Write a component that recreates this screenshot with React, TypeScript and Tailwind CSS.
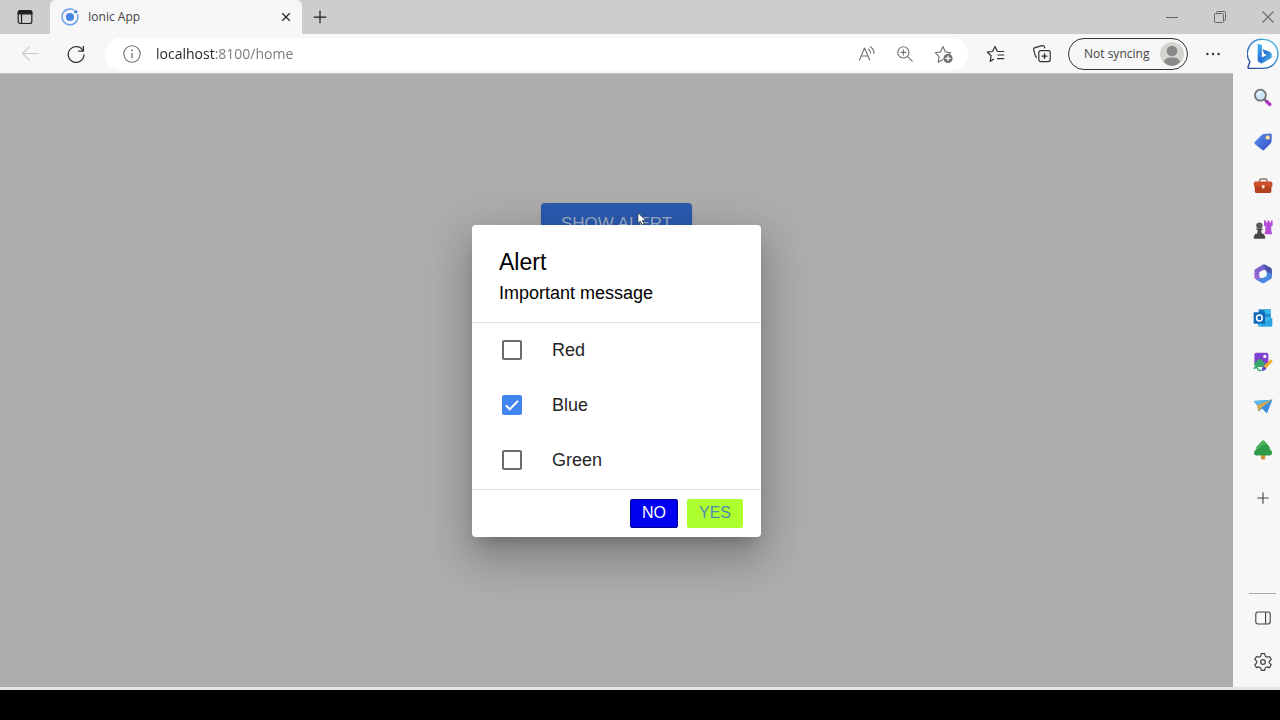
import React, { useState } from 'react';
import { Plus, X } from 'lucide-react';

interface IconProps {
  className?: string;
}

const TabActionsIcon: React.FC<IconProps> = ({ className }) => (
  <svg viewBox="0 0 16 16" className={className} fill="none" stroke="currentColor" strokeWidth="1.2">
    <rect x="1.2" y="1.5" width="13.6" height="13" rx="2" />
    <path d="M1.2 3.5a2 2 0 0 1 2-2h9.6a2 2 0 0 1 2 2V5H1.2z" fill="currentColor" />
    <path d="M4.5 5v9.5" />
  </svg>
);

const IonicIcon: React.FC<IconProps> = ({ className }) => (
  <svg viewBox="0 0 18 18" className={className} fill="none">
    <path d="M12.6 1.9A7.9 7.9 0 1 0 16.3 6" stroke="#6b9eec" strokeWidth="1.5" />
    <circle cx="9" cy="9" r="4.1" fill="#4a86e8" />
    <circle cx="14.7" cy="3.7" r="1.8" fill="#4a86e8" />
  </svg>
);

const BackIcon: React.FC<IconProps> = ({ className }) => (
  <svg viewBox="0 0 18 18" className={className} fill="none" stroke="currentColor" strokeWidth="1.2">
    <path d="M17.5 8.5H1.5M8.5 1.5 1.5 8.5l7 7" />
  </svg>
);

const RefreshIcon: React.FC<IconProps> = ({ className }) => (
  <svg viewBox="0 0 18 18" className={className} fill="none" stroke="currentColor" strokeWidth="1.3">
    <path d="M16.2 6A7.9 7.9 0 1 0 17 9.6" />
    <path d="M16.4 1v5.2h-5.2" />
  </svg>
);

const InfoIcon: React.FC<IconProps> = ({ className }) => (
  <svg viewBox="0 0 18 18" className={className} fill="none" stroke="currentColor" strokeWidth="1.1">
    <circle cx="9" cy="9" r="8.2" />
    <path d="M9 8v5.2" strokeWidth="1.3" />
    <circle cx="9" cy="5.4" r=".9" fill="currentColor" stroke="none" />
  </svg>
);

const ReadAloudIcon: React.FC<IconProps> = ({ className }) => (
  <svg viewBox="0 0 18 18" className={className} fill="none" stroke="currentColor" strokeWidth="1.1" strokeLinecap="round">
    <path d="M1.5 15 6.4 3.2h.3L11.7 15M3.2 11h6.8" />
    <path d="M10.6 4.2a5 5 0 0 1 2 3.9M12.4 1.8a8 8 0 0 1 3.6 6.8" />
  </svg>
);

const ZoomIcon: React.FC<IconProps> = ({ className }) => (
  <svg viewBox="0 0 18 18" className={className} fill="none" stroke="currentColor" strokeWidth="1.1" strokeLinecap="round">
    <circle cx="7.4" cy="7.4" r="5.6" />
    <path d="m11.6 11.6 4.6 4.6M7.4 4.9v5M4.9 7.4h5" />
  </svg>
);

const AddFavoriteIcon: React.FC<IconProps> = ({ className }) => (
  <svg viewBox="0 0 20 20" className={className} fill="none">
    <path
      d="m9 15.4-4.8 2.8.9-5.6L1.2 8.7l5.4-.8L9 2.6l2.4 5.3 5.4.8-2.2 2"
      stroke="currentColor"
      strokeWidth="1.1"
      strokeLinejoin="round"
    />
    <circle cx="14" cy="14.4" r="4.6" fill="currentColor" />
    <path d="M14 11.8V17M11.400 14.4h5.2" stroke="#fff" strokeWidth="1.3" />
  </svg>
);

const FavoritesIcon: React.FC<IconProps> = ({ className }) => (
  <svg viewBox="0 0 20 20" className={className} fill="none" stroke="currentColor" strokeWidth="1.2" strokeLinejoin="round">
    <path d="m7.8 15-3.6 2.4.9-5.6L1.400 8.200l5.200-.7L9 2.500l2.300 5h6.900" />
    <path d="M11.500 11h6.700M11 14.600h7.200" />
  </svg>
);

const CollectionsIcon: React.FC<IconProps> = ({ className }) => (
  <svg viewBox="0 0 20 20" className={className} fill="none" stroke="currentColor" strokeWidth="1.2" strokeLinejoin="round">
    <rect x="6.8" y="6.6" width="11.4" height="11" rx="2" />
    <path d="M12.5 9.2V15M9.6 12.1h5.8" strokeWidth="1.4" />
    <path d="M4.9 13.8 3.6 12.6 1.7 6a2 2 0 0 1 1.4-2.4l7-1.9a2 2 0 0 1 2.4 1.4l.4 1.3" />
  </svg>
);

const AvatarIcon: React.FC<IconProps> = ({ className }) => (
  <svg viewBox="0 0 24 24" className={className}>
    <circle cx="12" cy="12" r="12" fill="#d6d4d1" />
    <circle cx="12" cy="9" r="5.3" fill="#8a8886" />
    <path d="M4.2 20.6c0-3.3 2.6-5 7.8-5s7.8 1.7 7.8 5A12 12 0 0 1 12 24a12 12 0 0 1-7.8-3.4z" fill="#8a8886" />
  </svg>
);

const MoreIcon: React.FC<IconProps> = ({ className }) => (
  <svg viewBox="0 0 16 16" className={className} fill="currentColor">
    <circle cx="2.4" cy="8" r="1.2" />
    <circle cx="8" cy="8" r="1.2" />
    <circle cx="13.6" cy="8" r="1.2" />
  </svg>
);

const BingIcon: React.FC<IconProps> = ({ className }) => (
  <svg viewBox="0 0 32 32" className={className}>
    <defs>
      <linearGradient id="bing-ring" x1="0" y1="1" x2="1" y2="0">
        <stop offset="0" stopColor="#2b3f9c" />
        <stop offset=".5" stopColor="#3a86cc" />
        <stop offset="1" stopColor="#4cc4e2" />
      </linearGradient>
      <linearGradient id="bing-mark" x1="0" y1="0" x2="1" y2="1">
        <stop offset="0" stopColor="#3fc0f0" />
        <stop offset=".5" stopColor="#2a6fd6" />
        <stop offset="1" stopColor="#45c9d8" />
      </linearGradient>
    </defs>
    <path
      d="M16.4 1.4a14.4 14.4 0 1 1 0 29H2c-.9 0-1.2-.8-.9-1.600l1.800-5A14.400 14.400 0 0 1 16.400 1.400z"
      fill="#fff"
      stroke="url(#bing-ring)"
      strokeWidth="1.4"
    />
    <path
      d="m10.600 5.400 4.200 1.600v12.600l5-2.700-2.800-1.300-1.700-4.500 7.800 3c1.100.5 1.600 1.300 1.600 2.400v2.200c0 .8-.3 1.300-1.100 1.700l-8.300 4.800c-.8.4-1.500.3-2.200-.1l-1.500-1c-.7-.5-1-1-1-1.800z"
      fill="url(#bing-mark)"
    />
  </svg>
);

const SearchIcon: React.FC<IconProps> = ({ className }) => (
  <svg viewBox="0 0 20 20" className={className}>
    <path d="m13.400 13.200 3.400 3.200" stroke="#b03bc9" strokeWidth="3.400" strokeLinecap="round" />
    <path d="m11 10.800 2.200 2.200" stroke="#666" strokeWidth="1.800" />
    <circle cx="7.400" cy="7.200" r="5.500" fill="#cbe6f8" stroke="#717171" strokeWidth="1.700" />
    <path d="M4.600 7a3.300 3.300 0 0 1 3-2.600" stroke="#fff" strokeWidth="1.200" fill="none" />
  </svg>
);

const ShoppingIcon: React.FC<IconProps> = ({ className }) => (
  <svg viewBox="0 0 20 20" className={className}>
    <defs>
      <linearGradient id="tag" x1="0" y1="0" x2="1" y2="1">
        <stop offset="0" stopColor="#5b8df0" />
        <stop offset="1" stopColor="#3450c4" />
      </linearGradient>
    </defs>
    <path
      d="m10.600 2 6.600-.5c1 0 1.600.6 1.600 1.500l-.3 6.800c0 .6-.3 1-.7 1.400l-6.400 6.500c-.7.7-1.700.7-2.400 0l-6.900-5.500c-.8-.7-.8-1.700-.1-2.400l7.200-7.200c.4-.4.9-.6 1.400-.6z"
      fill="url(#tag)"
    />
    <rect x="12.600" y="3.400" width="4.200" height="4.200" rx="1.400" fill="#f4d071" />
    <circle cx="14.700" cy="5.500" r=".9" fill="#fff" />
  </svg>
);

const ToolsIcon: React.FC<IconProps> = ({ className }) => (
  <svg viewBox="0 0 20 20" className={className}>
    <path d="M6.600 6V4.400c0-1 .6-1.500 1.500-1.500h4.400c.9 0 1.500.6 1.500 1.500V6" fill="none" stroke="#8a7a62" strokeWidth="1.500" />
    <rect x=".8" y="5.600" width="18.600" height="5.400" rx="1.600" fill="#cf4f2c" />
    <path d="M1.800 10.600h16.600v4.900c0 .8-.6 1.400-1.400 1.400H3.200c-.8 0-1.400-.6-1.400-1.400z" fill="#b34020" />
    <rect x="8.800" y="9" width="2.800" height="3.600" rx="1" fill="#f0dcc4" />
  </svg>
);

const GamesIcon: React.FC<IconProps> = ({ className }) => (
  <svg viewBox="0 0 20 20" className={className}>
    <path d="M11 .6h2v1.800h1.500V.6h2v1.800H18V.6h1.600v5l-1.500 1.200.4 5.200 1 2.200h-8.200l1-2.600.2-4.800L11 5.600z" fill="#b44ad8" />
    <circle cx="6.400" cy="5.600" r="3.200" fill="#5a5a5a" />
    <path d="M3.400 8.400h6V10H8.200l.6 4.200H4.100l.6-4.200H3.400z" fill="#4a4a4a" />
    <path d="M2.400 13.800h8.200l1.500 2.600v2.400H.8v-2.400z" fill="#474747" />
  </svg>
);

const OfficeIcon: React.FC<IconProps> = ({ className }) => (
  <svg viewBox="0 0 20 20" className={className}>
    <defs>
      <linearGradient id="office-a" x1="0" y1="1" x2="1" y2="0">
        <stop offset="0" stopColor="#b06ad8" />
        <stop offset="1" stopColor="#5c62c4" />
      </linearGradient>
    </defs>
    <path d="M10.200.6c.6-.3 1.200-.3 1.800 0l6 3.500c.6.4.9.9.9 1.600v6.500L13.600 9V7L9.400 4.400z" fill="#4650a8" />
    <path d="M10.200.6 2.400 5c-.7.400-1 1-1 1.700v6.600c0 .8.300 1.300 1 1.700l4.300 2.300 2.200-2.200-2.400-1.800V8.400l5.900-3.600V2.200z" fill="url(#office-a)" />
    <path d="M18.900 10.200v3.100c0 .8-.3 1.300-1 1.700l-6.700 4c-.7.400-1.400.400-2.100 0l-6.400-3.600 4.500-.6 6.400-3.600V7.400z" fill="#4b86e0" />
    <path d="m10 6.200 3.500 2v3.900L10 14.100l-3.500-2V8.200z" fill="#f5f9fc" />
  </svg>
);

const OutlookIcon: React.FC<IconProps> = ({ className }) => (
  <svg viewBox="0 0 20 20" className={className}>
    <path d="M5.600 1.400h12v9.200h-12z" fill="#1679c2" />
    <path d="M11.500 1.400h6.100v4.900h-6.100z" fill="#38b8ea" />
    <path d="M11.500 6.300h6.100v5h-6.100z" fill="#2a8fd5" />
    <path d="m4.800 9 14.400.2v8.300c0 .6-.4 1-1 1H5.800c-.6 0-1-.4-1-1z" fill="#40bfec" />
    <path d="M19.200 9.400 6.200 18.500h12c.6 0 1-.4 1-1z" fill="#2aa4df" />
    <rect x=".6" y="4.200" width="11.600" height="11.600" rx="1" fill="#1269b4" />
    <ellipse cx="6.400" cy="10" rx="2.800" ry="3" fill="none" stroke="#fff" strokeWidth="1.600" />
  </svg>
);

const DesignerIcon: React.FC<IconProps> = ({ className }) => (
  <svg viewBox="0 0 20 20" className={className}>
    <rect x="1.400" y=".8" width="14" height="13" rx="1.800" fill="#8142d0" />
    <circle cx="11.800" cy="4.400" r="1.600" fill="#fff" />
    <path d="m1.400 11.200 4-3.600c.9-.8 1.900-.8 2.800 0l4.400 4.200-3 3.200H3.200c-1 0-1.800-.8-1.800-1.800z" fill="#39a56a" />
    <path d="m17.800 7.200 2 1.900-7.400 8.200-2.700-2.100z" fill="#f5ac2e" />
    <path d="m10.400 14 2.800 2.300c-.8 2.200-2.800 2.700-5 2.500 1-1.100.8-3.300 2.200-4.800z" fill="#5a48c8" />
    <path d="M.6 16.600c2-1.400 4.200-1.400 4.200.2 0 1.400 1.600 2 3.600 1.600" fill="none" stroke="#2fa56c" strokeWidth="1.400" />
  </svg>
);

const DropIcon: React.FC<IconProps> = ({ className }) => (
  <svg viewBox="0 0 20 20" className={className}>
    <path d="M.6 5 19.400 3.600l-5.500 13.600-4.700-4.800-3.800 3-1.300-6.200z" fill="#3c94dc" />
    <path d="M.6 5l18.800-1.400L4.100 9.200z" fill="#5fb4ea" />
    <path d="m4.100 9.200 15.300-5.600-10.600 7.600-3.400 4.200z" fill="#d9a946" />
    <path d="M19.400 3.600 9.200 12.400l4.700 4.800z" fill="#3f8ee0" />
  </svg>
);

const TreeIcon: React.FC<IconProps> = ({ className }) => (
  <svg viewBox="0 0 20 20" className={className}>
    <path d="M8 14h4.200v4.600c0 .5-.3.800-.8.800H8.800c-.5 0-.8-.3-.8-.8z" fill="#d09038" />
    <path
      d="M8.800 1.200c.8-.9 2-.9 2.800 0L16.200 6.600c.6.7.7 1.300.3 1.900l2 2.600c1.400 2 .4 4.300-1.800 4.300H3.500c-2.200 0-3.200-2.300-1.800-4.300l2-2.600c-.4-.6-.3-1.200.3-1.900z"
      fill="#2f9a48"
    />
    <path d="M8.800 1.200c.8-.9 2-.9 2.800 0l2 2.400c-3.600 2.400-7.300 4.600-11.400 7.100l1.500-2.200c-.4-.6-.3-1.200.3-1.900z" fill="#48b05a" />
  </svg>
);

const PanelIcon: React.FC<IconProps> = ({ className }) => (
  <svg viewBox="0 0 16 16" className={className} fill="none" stroke="currentColor" strokeWidth="1.1">
    <rect x=".8" y="2" width="14.4" height="12" rx="2.2" />
    <path d="M10.600 2v12" />
  </svg>
);

const SettingsIcon: React.FC<IconProps> = ({ className }) => (
  <svg viewBox="0 0 20 20" className={className} fill="none" stroke="currentColor" strokeWidth="1.2" strokeLinejoin="round">
    <path d="M8.300 1.700h3.400l.6 2.500 1.700 1 2.500-.7 1.700 2.900-1.900 1.800v1.700l1.900 1.800-1.700 2.900-2.500-.7-1.700 1-.6 2.500H8.300l-.6-2.500-1.700-1-2.500.7-1.700-2.900 1.900-1.800V9.200L1.800 7.400l1.700-2.900 2.500.7 1.700-1z" />
    <circle cx="10" cy="10" r="2.300" />
  </svg>
);

const CursorIcon: React.FC<IconProps> = ({ className }) => (
  <svg viewBox="0 0 10 14" className={className}>
    <path d="M1 .8v10.400l2.400-2.100 1.700 3.700 1.900-.8-1.700-3.600h3.400z" fill="#fff" stroke="#333" strokeWidth=".7" />
  </svg>
);

const sidebarItems = [
  { label: 'Search', Icon: SearchIcon },
  { label: 'Shopping', Icon: ShoppingIcon },
  { label: 'Tools', Icon: ToolsIcon },
  { label: 'Games', Icon: GamesIcon },
  { label: 'Microsoft 365', Icon: OfficeIcon },
  { label: 'Outlook', Icon: OutlookIcon },
  { label: 'Image Creator', Icon: DesignerIcon },
  { label: 'Drop', Icon: DropIcon },
  { label: 'Tree', Icon: TreeIcon },
];

const TitleBar: React.FC = () => (
  <header className="flex h-[34px] items-stretch bg-[#cdcdcd] text-[#222]">
    <button aria-label="Tab actions" className="flex w-[50px] items-center justify-center">
      <TabActionsIcon className="h-4 w-4" />
    </button>
    <div className="flex w-[252px] items-center rounded-t-md bg-[#f7f7f7] pr-2 pl-[11px]">
      <IonicIcon className="h-[18px] w-[18px]" />
      <span className="ml-[9px] flex-1 text-[12px] text-[#444]">Ionic App</span>
      <button aria-label="Close tab" className="flex h-4 w-4 items-center justify-center">
        <X className="h-[14px] w-[14px]" strokeWidth={2} />
      </button>
    </div>
    <button aria-label="New tab" className="flex w-9 items-center justify-center">
      <Plus className="h-5 w-5" strokeWidth={1.5} />
    </button>
    <div className="ml-auto flex text-[#666]">
      <button aria-label="Minimize" className="flex w-12 items-center justify-center">
        <svg viewBox="0 0 12 12" className="h-3 w-3" stroke="currentColor">
          <path d="M0 6.5h12" />
        </svg>
      </button>
      <button aria-label="Restore" className="flex w-12 items-center justify-center">
        <svg viewBox="0 0 12 12" className="h-3 w-3" fill="none" stroke="currentColor">
          <rect x=".5" y="2.5" width="9" height="9" rx="1" />
          <path d="M2.5 2.5v-1a1 1 0 0 1 1-1h7a1 1 0 0 1 1 1v7a1 1 0 0 1-1 1h-1" />
        </svg>
      </button>
      <button aria-label="Close" className="flex w-9 items-center justify-end pr-[6px]">
        <svg viewBox="0 0 12 12" className="h-3 w-3" stroke="currentColor" strokeWidth="1.1">
          <path d="m.5.5 11 11m0-11-11 11" />
        </svg>
      </button>
    </div>
  </header>
);

const Toolbar: React.FC = () => {
  const [url, setUrl] = useState('localhost:8100/home');

  return (
    <div className="flex h-[39px] items-center bg-[#f7f7f7] pl-[10px] text-[#333]">
      <button aria-label="Back" disabled className="flex w-10 justify-center text-[#ccc]">
        <BackIcon className="h-[18px] w-[18px]" />
      </button>
      <button aria-label="Refresh" className="ml-[6px] flex w-10 justify-center">
        <RefreshIcon className="h-[18px] w-[18px]" />
      </button>
      <div className="ml-[9px] flex h-8 flex-1 items-center rounded-full bg-white pr-[14px] pl-[18px] text-[#707070]">
        <InfoIcon className="h-[18px] w-[18px]" />
        <input
          type="text"
          aria-label="Address"
          value={url}
          onChange={(e) => setUrl(e.target.value)}
          className="ml-[15px] min-w-0 flex-1 bg-linear-to-r from-[#222] from-[59px] to-[#777] to-[59px] bg-clip-text text-[14px] text-transparent outline-none"
        />
        <div className="flex items-center gap-5">
          <button aria-label="Read aloud">
            <ReadAloudIcon className="h-[18px] w-[18px]" />
          </button>
          <button aria-label="Zoom">
            <ZoomIcon className="h-[18px] w-[18px]" />
          </button>
          <button aria-label="Add to favorites">
            <AddFavoriteIcon className="h-5 w-5" />
          </button>
        </div>
      </div>
      <button aria-label="Favorites" className="ml-[10px] flex w-9 justify-center">
        <FavoritesIcon className="h-5 w-5" />
      </button>
      <button aria-label="Collections" className="ml-[10px] flex w-9 justify-center">
        <CollectionsIcon className="h-5 w-5" />
      </button>
      <button className="ml-2 flex h-8 w-[120px] items-center justify-between rounded-full border border-[#333] pr-[3px] pl-[15px] text-[12px] whitespace-nowrap text-[#444]">
        Not syncing
        <AvatarIcon className="h-6 w-6" />
      </button>
      <button aria-label="Settings and more" className="ml-[7px] flex w-9 justify-center">
        <MoreIcon className="h-4 w-4" />
      </button>
      <button aria-label="Discover" className="ml-[15px] flex w-[34px] justify-center">
        <BingIcon className="h-8 w-8" />
      </button>
    </div>
  );
};

const Sidebar: React.FC = () => (
  <aside className="flex w-[47px] flex-col items-stretch bg-[#f7f7f7] pt-[3px] pl-3 text-[#444]">
    {sidebarItems.map(({ label, Icon }) => (
      <button key={label} aria-label={label} className="flex h-11 items-center justify-center">
        <Icon className="h-5 w-5" />
      </button>
    ))}
    <button aria-label="Customize" className="mt-1 flex h-11 items-center justify-center">
      <Plus className="h-[18px] w-[18px]" strokeWidth={1.5} />
    </button>
    <div className="mt-auto mr-1 ml-1 border-t border-[#aaa]" />
    <button aria-label="Hide sidebar" className="mt-[2px] flex h-11 items-center justify-center">
      <PanelIcon className="h-4 w-4" />
    </button>
    <button aria-label="Settings" className="mb-[3px] flex h-11 items-center justify-center">
      <SettingsIcon className="h-5 w-5" />
    </button>
  </aside>
);

const AlertDialog: React.FC = () => {
  const [options, setOptions] = useState([
    { label: 'Red', checked: false },
    { label: 'Blue', checked: true },
    { label: 'Green', checked: false },
  ]);

  const toggle = (index: number) => {
    setOptions(options.map((o, i) => (i === index ? { ...o, checked: !o.checked } : o)));
  };

  return (
    <div
      role="alertdialog"
      aria-labelledby="alert-title"
      className="w-[289px] rounded-[4px] bg-white shadow-[0_11px_15px_-7px_rgba(0,0,0,0.2),0_24px_38px_3px_rgba(0,0,0,0.14),0_9px_46px_8px_rgba(0,0,0,0.12)]"
    >
      <div className="border-b border-[#e0e0e0] px-[27px] pt-[23px] pb-4 text-black">
        <h2 id="alert-title" className="text-[23px] leading-7">Alert</h2>
        <h3 className="mt-1 text-[18px] leading-[26px]">Important message</h3>
      </div>
      <div className="border-b border-[#e0e0e0] pb-px">
        {options.map((option, index) => (
          <label key={option.label} className="flex h-[55px] items-center pl-[30px] text-[18px] text-[#262626]">
            <span className="relative flex">
              <input
                type="checkbox"
                checked={option.checked}
                onChange={() => toggle(index)}
                className="peer h-5 w-5 appearance-none rounded-[2px] border-2 border-[#6b6b6b] checked:border-[#4284f0] checked:bg-[#4284f0]"
              />
              <svg
                viewBox="0 0 20 20"
                className="pointer-events-none absolute inset-0 hidden h-5 w-5 peer-checked:block"
                fill="none"
                stroke="#fff"
                strokeWidth="2"
              >
                <path d="m3.8 10.3 4 4 8.2-8.4" />
              </svg>
            </span>
            <span className="ml-[30px]">{option.label}</span>
          </label>
        ))}
      </div>
      <div className="flex justify-end gap-[9px] py-[9px] pr-[18px] text-[16px]">
        <button className="h-[29px] w-12 rounded-[2px] border border-[#00008b] bg-[#0000f0] text-white">NO</button>
        <button className="h-[29px] w-14 rounded-[2px] bg-[#adff2f] text-[#4c8dac]">YES</button>
      </div>
    </div>
  );
};

const App: React.FC = () => {
  return (
    <div className="flex min-h-screen flex-col font-['Open_Sans','Segoe_UI',sans-serif]">
      <TitleBar />
      <Toolbar />
      <div className="flex flex-1">
        <main className="relative flex-1 border-t border-[#c4c4c4] bg-[#adadad] font-['Liberation_Sans',Arial,sans-serif]">
          <div className="flex justify-center pt-[129px]">
            <button className="h-[41px] w-[151px] rounded-[4px] bg-[#2b5aaf] text-[17px] whitespace-nowrap text-[#9dadc8] shadow-md">
              SHOW ALERT
            </button>
          </div>
          <div className="absolute inset-0 flex items-center justify-center">
            <AlertDialog />
          </div>
          <CursorIcon className="absolute top-[138px] left-[calc(50%+20px)] h-[14px] w-[10px]" />
        </main>
        <Sidebar />
      </div>
      <footer className="h-[33px] border-t-[3px] border-[#dfe8e6] bg-black" />
    </div>
  );
};

export default App;
